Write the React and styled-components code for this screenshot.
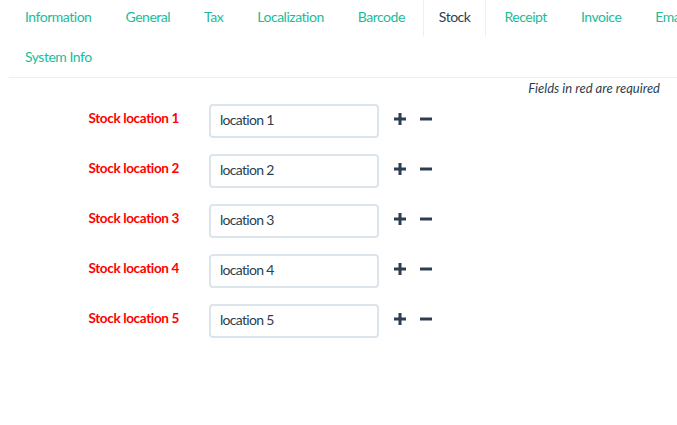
import React from 'react'
import styled, { createGlobalStyle } from 'styled-components'

const GlobalStyle = createGlobalStyle`
  html, body {
    margin: 0;
    padding: 0;
    background: #fff;
    overflow: hidden;
  }
  body {
    font-family: Lato, 'Open Sans', sans-serif;
    font-size: 14px;
    color: #2c3e50;
  }
`

const Page = styled.div`
  width: 677px;
  height: 425px;
  overflow: hidden;
`

const TabBar = styled.ul`
  list-style: none;
  margin: -3px 0 0 9px;
  padding: 0;
  width: 760px;
  display: flex;
  flex-wrap: wrap;
  border-bottom: 1px solid #ecf0f1;
`

const Tab = styled.li`
  margin-right: 2px;
`

const TabLink = styled.a`
  display: block;
  padding: 10px 15px;
  line-height: 18px;
  font-size: 14px;
  letter-spacing: -0.48px;
  text-decoration: none;
  cursor: pointer;
  border: 1px solid ${p => (p.$active ? '#ecf0f1' : 'transparent')};
  border-bottom-color: transparent;
  color: ${p => (p.$active ? '#2c3e50' : '#1abc9c')};
`

const Required = styled.div`
  text-align: right;
  padding: 1px 17px 0 0;
  font-size: 13px;
  font-style: italic;
  color: #2c3e50;
  line-height: 18px;
`

const Form = styled.div`
  display: flex;
  flex-direction: column;
  gap: 16px;
  margin-top: 7px;
`

const Row = styled.div`
  display: flex;
  align-items: center;
`

const Label = styled.label`
  width: 179px;
  text-align: right;
  font-size: 13.5px;
  letter-spacing: -0.35px;
  font-weight: 700;
  color: #ff0000;
  margin-right: 30px;
  margin-top: -6px;
`

const Input = styled.input`
  box-sizing: border-box;
  width: 170px;
  height: 34px;
  padding: 0 9px 3px;
  border: 2px solid #dce4ec;
  border-radius: 4px;
  font-family: Lato, 'Open Sans', sans-serif;
  font-size: 14px;
  letter-spacing: -0.7px;
  color: #2c3e50;
  outline: none;
`

const Actions = styled.div`
  display: flex;
  align-items: center;
  gap: 14px;
  margin-left: 15px;
  margin-top: -5px;
`

const IconButton = styled.span`
  display: inline-flex;
  width: 12px;
  height: 12px;
  cursor: pointer;
  color: #2c3e50;
`

const Plus = () => (
  <svg width="12" height="12" viewBox="0 0 12 12">
    <path d="M6 0v12M0 6h12" stroke="currentColor" strokeWidth="3" />
  </svg>
)

const Minus = () => (
  <svg width="12" height="12" viewBox="0 0 12 12">
    <path d="M0 6h12" stroke="currentColor" strokeWidth="3" />
  </svg>
)

const tabs = [
  'Information',
  'General',
  'Tax',
  'Localization',
  'Barcode',
  'Stock',
  'Receipt',
  'Invoice',
  'Email',
  'System Info',
]

const locations = [1, 2, 3, 4, 5]

export default function App() {
  return (
    <Page>
      <GlobalStyle />
      <TabBar>
        {tabs.map(t => (
          <Tab key={t}>
            <TabLink $active={t === 'Stock'}>{t}</TabLink>
          </Tab>
        ))}
      </TabBar>
      <Required>Fields in red are required</Required>
      <Form>
        {locations.map(n => (
          <Row key={n}>
            <Label>Stock location {n}</Label>
            <Input defaultValue={`location ${n}`} />
            <Actions>
              <IconButton><Plus /></IconButton>
              <IconButton><Minus /></IconButton>
            </Actions>
          </Row>
        ))}
      </Form>
    </Page>
  )
}
